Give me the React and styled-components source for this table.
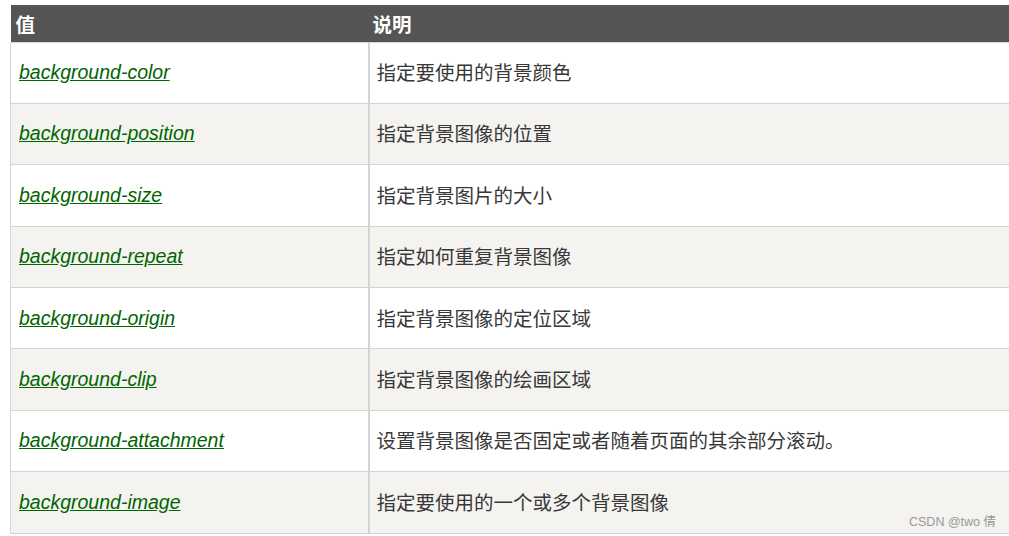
import React from "react";
import styled, { createGlobalStyle } from "styled-components";

const GlobalStyle = createGlobalStyle`
  html, body {
    margin: 0;
    padding: 0;
    background: #fff;
    overflow: hidden;
  }
`;

const Page = styled.div`
  position: relative;
  width: 1009px;
  height: 536px;
  padding: 5px 0 0 10px;
  box-sizing: border-box;
  overflow: hidden;
`;

const Table = styled.table`
  width: 1120px;
  border-collapse: collapse;
  table-layout: fixed;
  font-family: "Liberation Sans", "Noto Sans CJK SC", sans-serif;
  font-size: 19.5px;
  color: #333;
`;

const HeadCell = styled.th`
  background: #555;
  color: #fff;
  font-weight: bold;
  text-align: left;
  height: 37px;
  padding: 0 0 0 ${(p) => (p.$first ? "5px" : "4px")};
  font-family: "Noto Sans CJK SC", sans-serif;
  font-size: 19.5px;
  line-height: 1;
  box-sizing: border-box;
`;

const Row = styled.tr`
  background: ${(p) => (p.$odd ? "#f4f3f0" : "#fff")};
`;

const Cell = styled.td`
  height: 61.4px;
  box-sizing: border-box;
  border: 1px solid #d4d4d4;
  border-left-width: ${(p) => (p.$first ? "1px" : "2px")};
  padding: 0 0 0 ${(p) => (p.$first ? "8px" : "7px")};
  vertical-align: middle;
  line-height: 1.2;
`;

const PropLink = styled.a`
  color: #006400;
  font-style: italic;
  text-decoration: underline;
  font-family: "Liberation Sans", sans-serif;
`;

const Desc = styled.span`
  font-family: "Noto Sans CJK SC", sans-serif;
  font-size: 19.5px;
  color: #383838;
`;

const Watermark = styled.div`
  position: absolute;
  left: 909px;
  top: 511px;
  font-family: "Liberation Sans", "Noto Sans CJK SC", sans-serif;
  font-size: 12.5px;
  color: #9a9a9a;
  white-space: nowrap;
`;

const rows = [
  ["background-color", "指定要使用的背景颜色"],
  ["background-position", "指定背景图像的位置"],
  ["background-size", "指定背景图片的大小"],
  ["background-repeat", "指定如何重复背景图像"],
  ["background-origin", "指定背景图像的定位区域"],
  ["background-clip", "指定背景图像的绘画区域"],
  ["background-attachment", "设置背景图像是否固定或者随着页面的其余部分滚动。"],
  ["background-image", "指定要使用的一个或多个背景图像"],
];

export default function App() {
  return (
    <>
      <GlobalStyle />
      <Page>
        <Table>
          <colgroup>
            <col style={{ width: "358px" }} />
            <col />
          </colgroup>
          <thead>
            <tr>
              <HeadCell $first>值</HeadCell>
              <HeadCell>说明</HeadCell>
            </tr>
          </thead>
          <tbody>
            {rows.map(([name, desc], i) => (
              <Row key={name} $odd={i % 2 === 1}>
                <Cell $first>
                  <PropLink href="#">{name}</PropLink>
                </Cell>
                <Cell>
                  <Desc>{desc}</Desc>
                </Cell>
              </Row>
            ))}
          </tbody>
        </Table>
        <Watermark>CSDN @two 倩</Watermark>
      </Page>
    </>
  );
}
